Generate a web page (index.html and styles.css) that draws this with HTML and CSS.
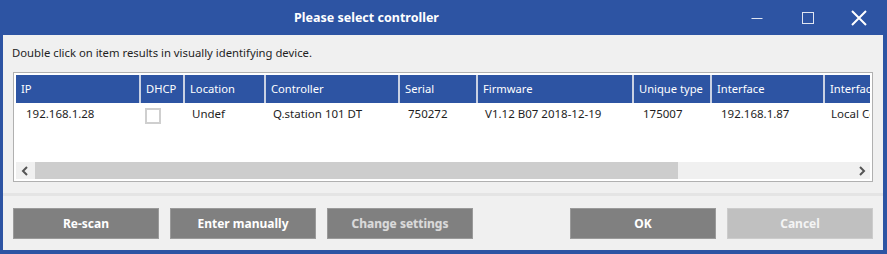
FILE: index.html
```html
<!DOCTYPE html>
<html>
<head>
<meta charset="utf-8">
<link rel="stylesheet" href="styles.css">
</head>
<body>
<div class="window">
  <div class="titlebar">
    <div class="title">Please select controller</div>
    <div class="controls">
      <div class="ctl"><svg width="12" height="12" viewBox="0 0 12 12"><line x1="0.5" y1="6.5" x2="11.5" y2="6.5" stroke="#dfe5f1" stroke-width="1"/></svg></div>
      <div class="ctl"><svg width="12" height="12" viewBox="0 0 12 12"><rect x="0.5" y="0.5" width="11" height="11" fill="none" stroke="#dfe5f1" stroke-width="1"/></svg></div>
      <div class="ctl"><svg width="16" height="16" viewBox="0 0 16 16"><path d="M1 1 L15 15 M15 1 L1 15" stroke="#ffffff" stroke-width="2"/></svg></div>
    </div>
  </div>
  <div class="panel">
    <div class="hint">Double click on item results in visually identifying device.</div>
    <div class="listbox">
      <div class="inner">
        <div class="grid head">
          <div class="hc">IP</div>
          <div class="hc">DHCP</div>
          <div class="hc">Location</div>
          <div class="hc">Controller</div>
          <div class="hc">Serial</div>
          <div class="hc">Firmware</div>
          <div class="hc">Unique type</div>
          <div class="hc">Interface</div>
          <div class="hc">Interface name</div>
        </div>
        <div class="body">
          <div class="grid row">
            <div class="c ip">192.168.1.28</div>
            <div class="c chk"><span class="box"></span></div>
            <div class="c">Undef</div>
            <div class="c">Q.station 101 DT</div>
            <div class="c pad8">750272</div>
            <div class="c">V1.12 B07 2018-12-19</div>
            <div class="c pad9">175007</div>
            <div class="c pad9">192.168.1.87</div>
            <div class="c pad6">Local Connection</div>
          </div>
        </div>
        <div class="hscroll">
          <div class="arrow"><svg width="8" height="10" viewBox="0 0 8 10"><polyline points="6,1 2,5 6,9" fill="none" stroke="#555" stroke-width="2"/></svg></div>
          <div class="track"><div class="thumb"></div></div>
          <div class="arrow"><svg width="8" height="10" viewBox="0 0 8 10"><polyline points="2,1 6,5 2,9" fill="none" stroke="#555" stroke-width="2"/></svg></div>
        </div>
      </div>
    </div>
    <div class="sep"></div>
    <div class="buttons">
      <div class="btn">Re-scan</div>
      <div class="btn">Enter manually</div>
      <div class="btn disabled">Change settings</div>
      <div class="spacer"></div>
      <div class="btn">OK</div>
      <div class="btn light">Cancel</div>
    </div>
  </div>
</div>
</body>
</html>
```

FILE: styles.css
```css
html, body {
  margin: 0;
  padding: 0;
}
body {
  width: 887px;
  height: 254px;
  background: #2d54a3;
  font-family: "Noto Sans", "Open Sans", sans-serif;
  overflow: hidden;
}
.window {
  width: 887px;
  height: 254px;
  display: flex;
  flex-direction: column;
}
.titlebar {
  height: 35px;
  display: flex;
  align-items: center;
  flex-shrink: 0;
}
.title {
  flex: 1;
  text-align: center;
  color: #ffffff;
  font-weight: bold;
  font-size: 12.5px;
  padding-left: 2px;
}
.controls {
  display: flex;
  padding-right: 3px;
  height: 35px;
}
.ctl {
  width: 51px;
  display: flex;
  align-items: center;
  justify-content: center;
}
.panel {
  margin: 0 4px 4px 3px;
  background: #f0f0f0;
  height: 215px;
  display: flex;
  flex-direction: column;
}
.hint {
  font-size: 11.3px;
  color: #1f1f1f;
  height: 16px;
  line-height: 16px;
  margin: 10px 0 11px 9px;
}
.listbox {
  margin: 0 10px;
  height: 110px;
  box-sizing: border-box;
  border: 1px solid #b0b0b0;
  padding: 2px;
  background: #ffffff;
}
.inner {
  height: 104px;
  display: flex;
  flex-direction: column;
  overflow: hidden;
}
.grid {
  display: grid;
  grid-template-columns: 125px 44px 81px 134px 78px 156px 78px 113px 120px;
  width: 929px;
}
.head {
  height: 28px;
  flex-shrink: 0;
}
.hc {
  background: #2d54a3;
  color: #ffffff;
  font-size: 11.2px;
  line-height: 28px;
  padding-left: 5px;
  border-right: 2px solid #c9d1e3;
  white-space: nowrap;
  overflow: hidden;
}
.body {
  flex: 1;
}
.row {
  height: 22px;
}
.c {
  font-size: 11.5px;
  color: #1e1e1e;
  line-height: 22px;
  padding-left: 7px;
  white-space: nowrap;
  overflow: hidden;
}
.ip { padding-left: 10px; }
.pad8 { padding-left: 8px; }
.pad9 { padding-left: 9px; }
.pad6 { padding-left: 6px; }
.chk {
  padding-left: 4px;
  display: flex;
  align-items: center;
  padding-top: 3px;
}
.box {
  width: 12px;
  height: 12px;
  border: 2px solid #cfcfcf;
  background: #ffffff;
}
.hscroll {
  height: 17px;
  display: flex;
  flex-shrink: 0;
  background: #f0f0f0;
}
.arrow {
  width: 17px;
  display: flex;
  align-items: center;
  justify-content: center;
}
.track {
  flex: 1;
  display: flex;
  padding: 0 2px;
}
.thumb {
  width: 643px;
  background: #cdcdcd;
}
.sep {
  height: 3px;
  background: #e4e4e4;
  margin-top: 11px;
}
.buttons {
  display: flex;
  gap: 11px;
  padding: 12px 10px 0 10px;
}
.spacer {
  flex: 1;
}
.btn {
  width: 146px;
  height: 31px;
  box-sizing: border-box;
  border: 1px solid #9a9a9a;
  background: #808080;
  color: #ffffff;
  font-weight: bold;
  font-size: 12px;
  display: flex;
  align-items: center;
  justify-content: center;
}
.btn.disabled {
  color: #dadada;
  text-shadow: 0 0 1px #9d9d9d;
}
.btn.light {
  background: #c0c0c0;
  border-color: #cccccc;
  color: #f4f4f4;
}
```
